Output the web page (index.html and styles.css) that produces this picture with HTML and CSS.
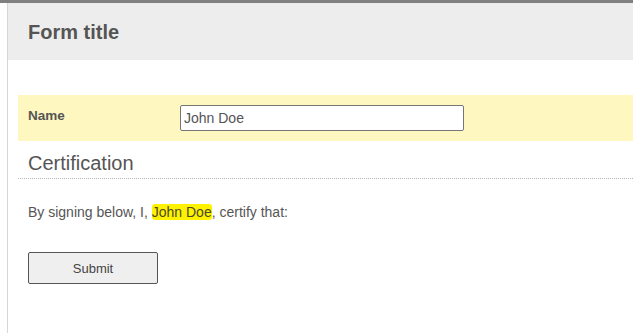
FILE: index.html
```html
<!DOCTYPE html>
<html>
<head>
<meta charset="utf-8">
<link rel="stylesheet" href="styles.css">
</head>
<body>
<div class="topbar"></div>
<div class="page">
  <header class="form-header">
    <h1 class="form-title">Form title</h1>
  </header>
  <form class="form-body">
    <div class="field-row">
      <label class="field-label" for="name">Name</label>
      <input class="field-input" id="name" type="text" value="John Doe">
    </div>
    <h2 class="section-title">Certification</h2>
    <p class="statement">By signing below, I, <span class="hl">John Doe</span>, certify that:</p>
    <button class="submit-btn" type="button">Submit</button>
  </form>
</div>
</body>
</html>
```

FILE: styles.css
```css
html, body {
  margin: 0;
  padding: 0;
  background: #fff;
  font-family: "Liberation Sans", Arial, sans-serif;
  color: #555;
}
.topbar {
  height: 3px;
  background: #808080;
}
.page {
  margin-left: 7px;
  border-left: 1px solid #d6d6d6;
  min-height: 330px;
}
.form-header {
  background: #ededed;
  height: 57px;
  padding-left: 20px;
  display: flex;
  align-items: center;
}
.form-title {
  margin: 0;
  font-size: 20px;
  font-weight: bold;
  color: #555;
  line-height: 1;
}
.form-body {
  padding: 35px 0 0 10px;
  margin: 0;
}
.field-row {
  background: #fef7c0;
  height: 46px;
  display: flex;
  align-items: center;
  padding-left: 10px;
}
.field-label {
  width: 152px;
  font-size: 13.5px;
  font-weight: bold;
  color: #555;
  margin-top: -6px;
}
.field-input {
  box-sizing: border-box;
  width: 284px;
  height: 26px;
  border: 1px solid #767676;
  border-radius: 2px;
  padding: 0 3px;
  font-family: "Liberation Sans", Arial, sans-serif;
  font-size: 14px;
  color: #555;
  background: #fff;
  margin-top: -1px;
}
.section-title {
  margin: 0;
  padding: 10px 0 0 10px;
  height: 27px;
  font-size: 20px;
  font-weight: normal;
  line-height: 24px;
  color: #555;
  border-bottom: 1px dotted #b5b5b5;
}
.statement {
  margin: 24px 0 0 10px;
  font-size: 14px;
  line-height: 18px;
  color: #555;
}
.hl {
  background: #fef200;
  border-radius: 3px;
  color: #4a4a2a;
}
.submit-btn {
  margin: 31px 0 0 10px;
  width: 130px;
  height: 32px;
  background: #efefef;
  border: 1px solid #555;
  border-radius: 2px;
  font-family: "Liberation Sans", Arial, sans-serif;
  font-size: 13px;
  color: #444;
}
```
